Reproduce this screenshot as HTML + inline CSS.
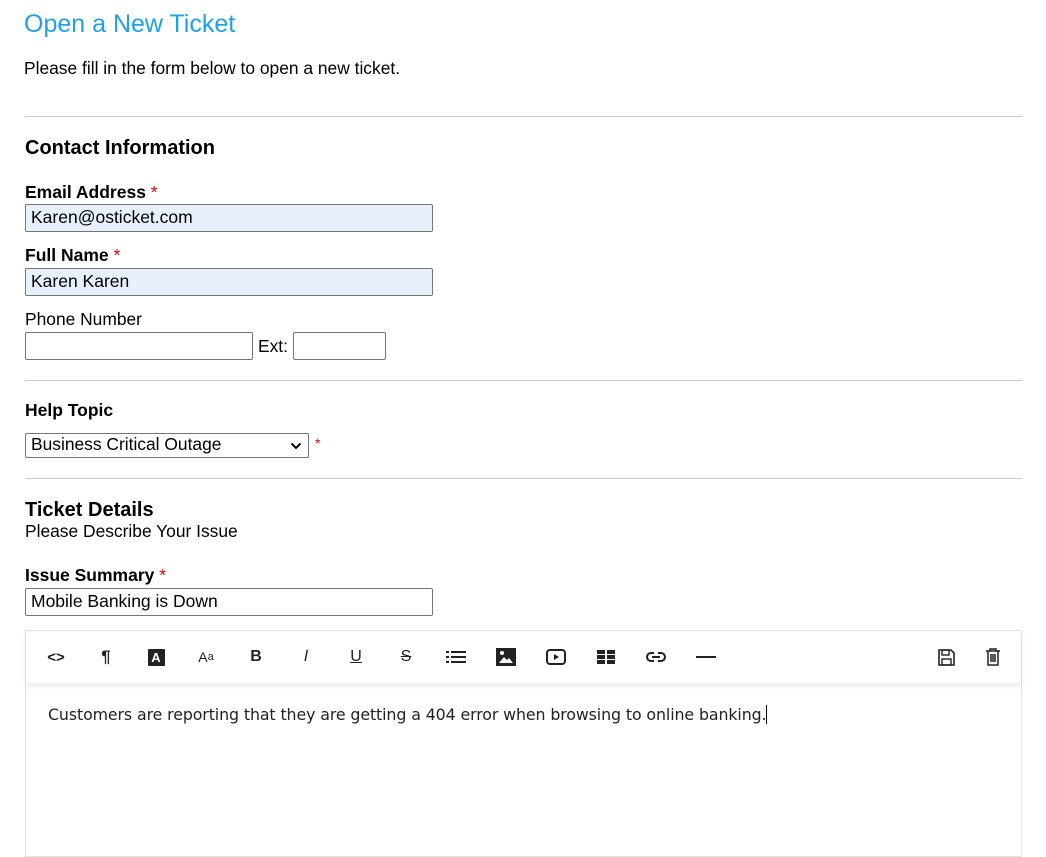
<!DOCTYPE html>
<html><head><meta charset="utf-8"><style>
html,body{margin:0;width:1046px;height:857px;overflow:hidden}
body{background:#fff;font-family:"Liberation Sans",Arial,sans-serif;color:#000;position:relative}
.a{position:absolute;white-space:nowrap}
.hr{position:absolute;left:25px;width:997px;height:1px;background:#ccc}
.lab{font-size:17.5px;font-weight:bold}
.req{color:#e00;font-weight:normal}
.inp{position:absolute;box-sizing:border-box;border:1px solid #767676;border-radius:2px;height:28px;font-size:17.5px;padding:2px 5px;line-height:21px}
.ic{position:absolute;top:647px;width:20px;height:20px;display:flex;align-items:center;justify-content:center;font-size:15px;color:#222}
</style></head><body>
<div class="a" style="left:24px;top:10px;font-size:25px;color:#1ea1e8">Open a New Ticket</div>
<div class="a" style="left:24px;top:58px;font-size:17.4px">Please fill in the form below to open a new ticket.</div>
<div class="hr" style="top:116px"></div>
<div class="a" style="left:25px;top:137px;font-size:20px;font-weight:bold">Contact Information</div>
<div class="a lab" style="left:25px;top:182px">Email Address <span class="req">*</span></div>
<div class="inp" style="left:25px;top:204px;width:408px;background:#e8f0fe">Karen@osticket.com</div>
<div class="a lab" style="left:25px;top:245px">Full Name <span class="req">*</span></div>
<div class="inp" style="left:25px;top:268px;width:408px;background:#e8f0fe">Karen Karen</div>
<div class="a" style="left:25px;top:309px;font-size:17.4px">Phone Number</div>
<div class="inp" style="left:25px;top:332px;width:228px"></div>
<div class="a" style="left:258px;top:336px;font-size:17.4px">Ext:</div>
<div class="inp" style="left:293px;top:332px;width:93px"></div>
<div class="hr" style="top:380px"></div>
<div class="a lab" style="left:25px;top:400px">Help Topic</div>
<div class="inp" style="left:25px;top:433px;width:284px;height:25px;padding:0 5px;font-size:17.4px">Business Critical Outage
<svg style="position:absolute;right:6px;top:8px" width="12" height="8" viewBox="0 0 12 8"><path d="M1.5 1.5L6 6L10.5 1.5" fill="none" stroke="#000" stroke-width="2"/></svg></div>
<div class="a req" style="left:315px;top:435px;font-size:14px">*</div>
<div class="hr" style="top:478px"></div>
<div class="a" style="left:25px;top:499px;font-size:20px;font-weight:bold">Ticket Details</div>
<div class="a" style="left:25px;top:521px;font-size:17.4px">Please Describe Your Issue</div>
<div class="a lab" style="left:25px;top:565px">Issue Summary <span class="req">*</span></div>
<div class="inp" style="left:25px;top:588px;width:408px">Mobile Banking is Down</div>
<div style="position:absolute;left:25px;top:630px;width:997px;height:227px;box-sizing:border-box;border:1px solid #e4e4e4"></div>
<div style="position:absolute;left:26px;top:631px;width:995px;height:52px;background:#fff;box-shadow:0 3px 6px rgba(0,0,0,.08)"></div>
<div class="ic" style="left:46px;font-weight:bold">&lt;&gt;</div>
<div class="ic" style="left:96px;font-size:17px;font-weight:bold">¶</div>
<div class="ic" style="left:146px"><span style="background:#222;color:#fff;font-weight:bold;font-size:13px;width:17px;height:17px;display:inline-block;text-align:center;line-height:17px;border-radius:1px">A</span></div>
<div class="ic" style="left:196px;font-size:14px">A<span style="font-size:11px">a</span></div>
<div class="ic" style="left:246px;font-weight:bold;font-size:16px">B</div>
<div class="ic" style="left:296px;font-style:italic;font-size:16px">I</div>
<div class="ic" style="left:346px;text-decoration:underline;font-size:16px">U</div>
<div class="ic" style="left:396px;text-decoration:line-through;font-size:16px">S</div>
<div class="ic" style="left:446px"><svg width="20" height="14"><g fill="#222"><rect x="0" y="1" width="3" height="2"/><rect x="0" y="6" width="3" height="2"/><rect x="0" y="11" width="3" height="2"/><rect x="5" y="1" width="15" height="2"/><rect x="5" y="6" width="15" height="2"/><rect x="5" y="11" width="15" height="2"/></g></svg></div>
<div class="ic" style="left:496px"><svg width="20" height="18"><rect width="20" height="18" fill="#222"/><path d="M3 15L8 9L11 12L13 10L17 15Z" fill="#fff"/><circle cx="6" cy="5" r="2" fill="#fff"/></svg></div>
<div class="ic" style="left:546px"><svg width="20" height="16"><rect x="1" y="1" width="18" height="14" rx="3" fill="none" stroke="#222" stroke-width="2"/><path d="M8 5L13 8L8 11Z" fill="#222"/></svg></div>
<div class="ic" style="left:596px"><svg width="18" height="14"><g fill="#222"><rect width="8" height="4"/><rect x="10" width="8" height="4"/><rect y="5" width="8" height="4"/><rect x="10" y="5" width="8" height="4"/><rect y="10" width="8" height="4"/><rect x="10" y="10" width="8" height="4"/></g></svg></div>
<div class="ic" style="left:646px"><svg width="20" height="12"><path d="M8 2H5a4 4 0 0 0 0 8h3M12 2h3a4 4 0 0 1 0 8h-3M6 6h8" fill="none" stroke="#222" stroke-width="2"/></svg></div>
<div class="ic" style="left:696px"><svg width="20" height="4"><rect y="1" width="20" height="2" fill="#222"/></svg></div>
<div class="ic" style="left:936px"><svg width="17" height="17"><path d="M1 1H13L16 4V16H1Z" fill="none" stroke="#222" stroke-width="1.6"/><rect x="4" y="1" width="7" height="5" fill="none" stroke="#222" stroke-width="1.4"/><rect x="4" y="10" width="9" height="6" fill="none" stroke="#222" stroke-width="1.4"/></svg></div>
<div class="ic" style="left:983px"><svg width="16" height="18"><path d="M1 3H15M5 3V1H11V3M3 3V17H13V3M6 6V14M8 6V14M10 6V14" fill="none" stroke="#222" stroke-width="1.5"/></svg></div>
<div class="a" style="left:48px;top:705px;font-family:'DejaVu Sans',sans-serif;font-size:15.8px;color:#222;letter-spacing:-0.1px">Customers are reporting that they are getting a 404 error when browsing to online banking.<span style="display:inline-block;width:1px;height:19px;background:#000;vertical-align:-4px"></span></div>
</body></html>
